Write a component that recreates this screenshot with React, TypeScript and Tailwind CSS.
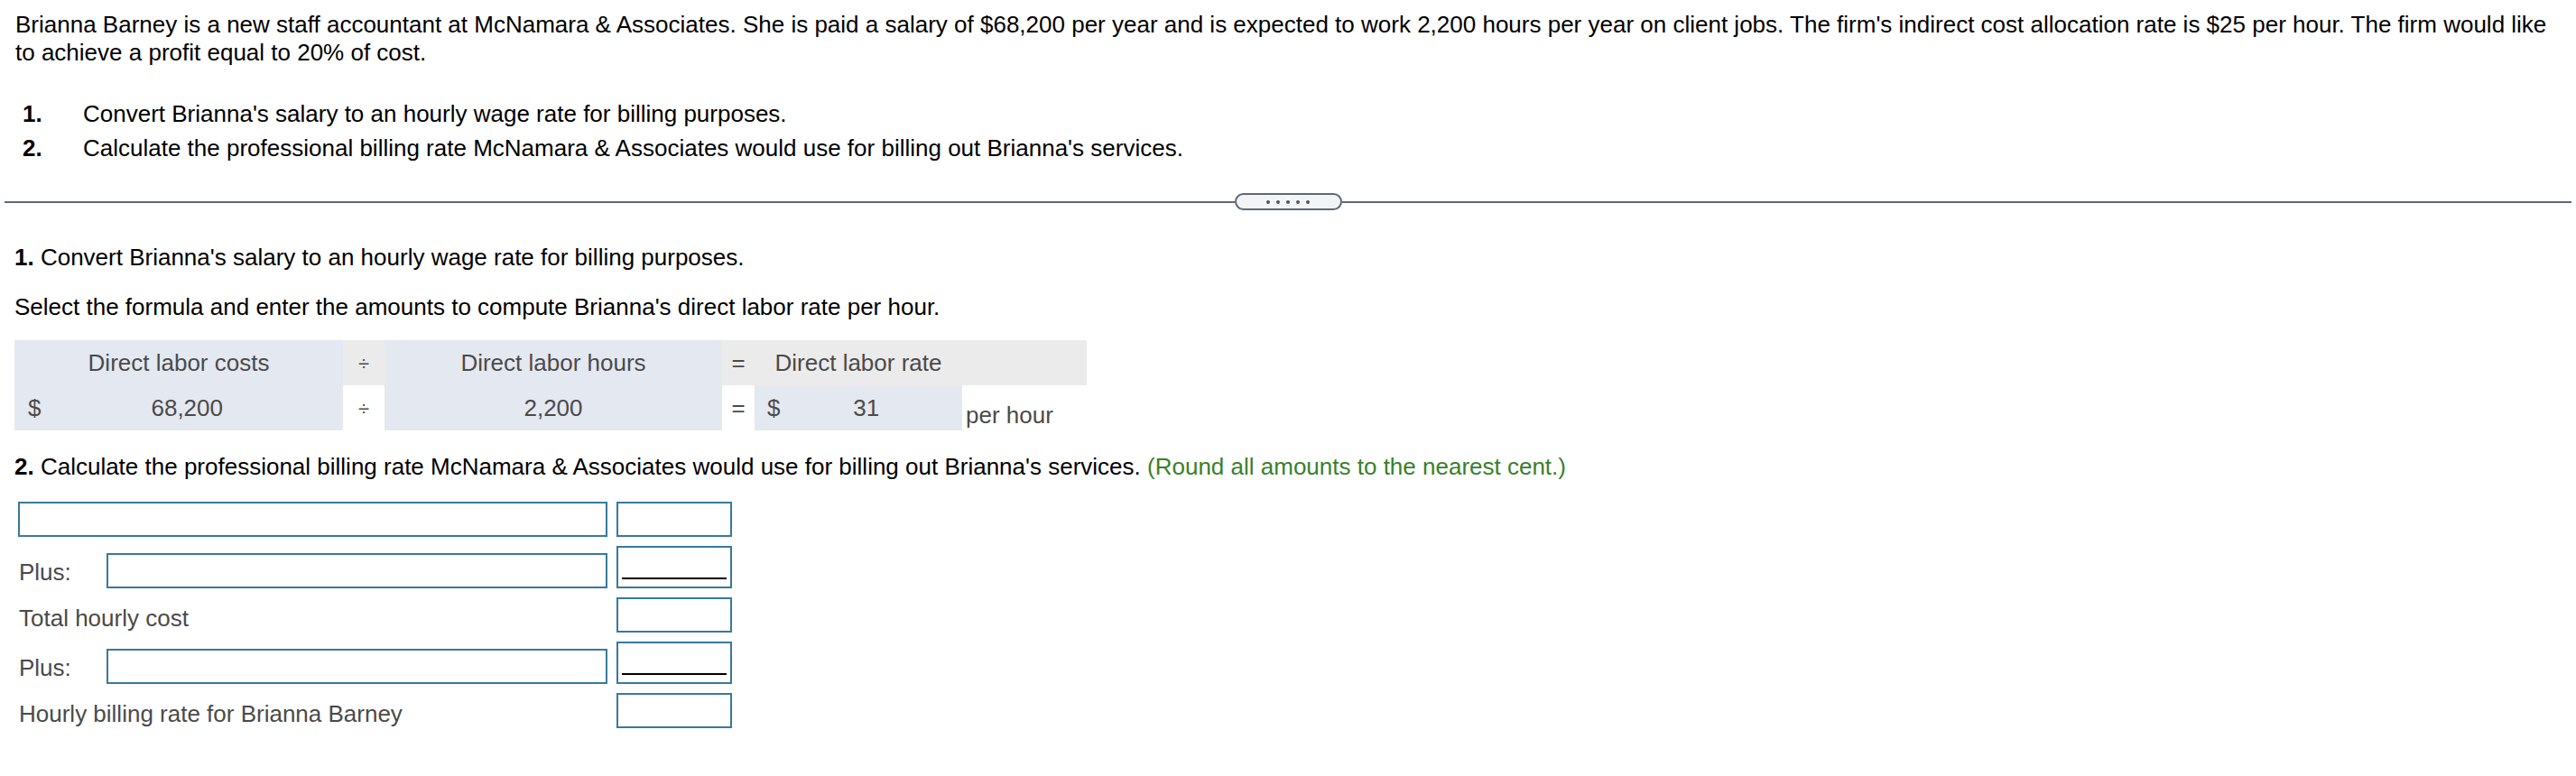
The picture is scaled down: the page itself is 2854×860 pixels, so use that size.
import type { ReactNode } from "react"

const BLUE = "bg-[#e4e8f1]"
const GRAY = "bg-[#ebebeb]"

const Cell = ({ className, children }: { className: string; children?: ReactNode }) => (
  <div className={`flex h-[50px] items-center ${className}`}>{children}</div>
)

const AmountBox = ({ underline, className = "" }: { underline?: boolean; className?: string }) => (
  <div
    className={`relative w-[128px] shrink-0 border-2 border-[#377a9c] bg-white ${
      underline ? "h-[47px]" : "h-[39px]"
    } ${className}`}
  >
    {underline && <div className="absolute right-[4px] bottom-[8px] left-[4px] h-[2px] bg-black" />}
  </div>
)

const LabelBox = ({ className = "" }: { className?: string }) => (
  <div className={`h-[39px] shrink-0 border-2 border-[#377a9c] bg-white ${className}`} />
)

export default function App() {
  return (
    <div className="min-h-[860px] w-[2854px] bg-white font-['Liberation_Sans',Arial,sans-serif] text-[26px] leading-[31px] text-black">
      <div className="px-[17px] pt-[12px]">
        <p>
          Brianna Barney is a new staff accountant at McNamara &amp; Associates. She is paid a salary of
          $68,200 per year and is expected to work 2,200 hours per year on client jobs. The firm's indirect
          cost allocation rate is $25 per hour. The firm would like to achieve a profit equal to 20% of cost.
        </p>
        <ol className="mt-[33px] leading-[38px]">
          <li className="flex">
            <span className="ml-[8px] w-[67px] shrink-0 font-bold">1.</span>
            <span>Convert Brianna's salary to an hourly wage rate for billing purposes.</span>
          </li>
          <li className="flex">
            <span className="ml-[8px] w-[67px] shrink-0 font-bold">2.</span>
            <span>Calculate the professional billing rate McNamara &amp; Associates would use for billing out Brianna's services.</span>
          </li>
        </ol>
      </div>

      <div className="mt-[31px] flex h-[19px] items-center px-[5px]">
        <div className="h-[2px] flex-1 bg-[#5e6977]" />
        <div className="flex h-[19px] w-[119px] items-center justify-center gap-[7px] rounded-full border-2 border-[#5e6977] bg-[#f3f4f6]">
          {[0, 1, 2, 3, 4].map((i) => (
            <span key={i} className="h-[4px] w-[4px] rounded-full bg-[#4b5563]" />
          ))}
        </div>
        <div className="h-[2px] flex-1 bg-[#5e6977]" />
      </div>

      <div className="px-[16px]">
        <p className="mt-[37px]">
          <span className="font-bold">1.</span> Convert Brianna's salary to an hourly wage rate for billing purposes.
        </p>
        <p className="mt-[24px]">Select the formula and enter the amounts to compute Brianna's direct labor rate per hour.</p>

        <div className="mt-[21px] grid w-[1188px] grid-cols-[364px_46px_374px_36px_230px_138px] text-[#4a4a4a]">
          <Cell className={`${BLUE} justify-center`}>Direct labor costs</Cell>
          <Cell className={`${GRAY} justify-center text-[22px]`}>÷</Cell>
          <Cell className={`${BLUE} justify-center`}>Direct labor hours</Cell>
          <Cell className={`${GRAY} justify-center`}>=</Cell>
          <Cell className={`${GRAY} justify-center`}>Direct labor rate</Cell>
          <Cell className={GRAY} />

          <Cell className={`${BLUE} pl-[15px]`}>
            <span>$</span>
            <span className="flex-1 pr-[11px] text-center">68,200</span>
          </Cell>
          <Cell className="justify-center bg-white text-[22px]">÷</Cell>
          <Cell className={`${BLUE} justify-center`}>2,200</Cell>
          <Cell className="justify-center bg-white">=</Cell>
          <Cell className={`${BLUE} pl-[14px]`}>
            <span>$</span>
            <span className="flex-1 pr-[11px] text-center">31</span>
          </Cell>
          <Cell className="items-end bg-white pb-[1px] pl-[4px]">per hour</Cell>
        </div>

        <p className="mt-[25px]">
          <span className="font-bold">2.</span> Calculate the professional billing rate McNamara &amp; Associates would
          use for billing out Brianna's services.{" "}
          <span className="text-[#37812a]">(Round all amounts to the nearest cent.)</span>
        </p>

        <div className="mt-[23px] flex flex-col gap-[10px] pl-[4px] text-[#4a4a4a]">
          <div className="flex items-end gap-[10px]">
            <LabelBox className="w-[653px]" />
            <AmountBox />
          </div>
          <div className="flex items-end gap-[10px]">
            <div className="flex w-[653px] items-center">
              <span className="w-[98px] shrink-0 pt-[4px] pl-[1px]">Plus:</span>
              <LabelBox className="flex-1" />
            </div>
            <AmountBox underline />
          </div>
          <div className="flex items-end gap-[10px]">
            <div className="flex h-[39px] w-[653px] items-center pt-[8px] pl-[1px]">Total hourly cost</div>
            <AmountBox />
          </div>
          <div className="flex items-end gap-[10px]">
            <div className="flex w-[653px] items-center">
              <span className="w-[98px] shrink-0 pt-[4px] pl-[1px]">Plus:</span>
              <LabelBox className="flex-1" />
            </div>
            <AmountBox underline />
          </div>
          <div className="flex items-end gap-[10px]">
            <div className="flex h-[39px] w-[653px] items-center pt-[7px] pl-[1px]">Hourly billing rate for Brianna Barney</div>
            <AmountBox />
          </div>
        </div>
      </div>
    </div>
  )
}
